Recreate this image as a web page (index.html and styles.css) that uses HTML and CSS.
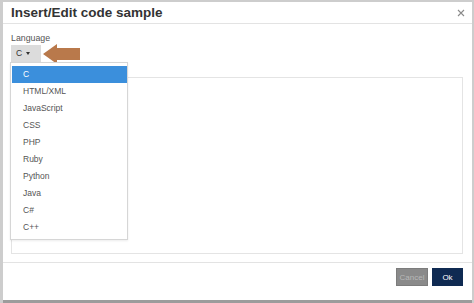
FILE: index.html
```html
<!DOCTYPE html>
<html>
<head>
<meta charset="utf-8">
<link rel="stylesheet" href="styles.css">
</head>
<body>
<div class="dialog">
  <div class="head">
    <div class="title">Insert/Edit code sample</div>
    <svg class="close" width="8" height="8" viewBox="0 0 8 8">
      <path d="M1 1 L7 7 M7 1 L1 7" stroke="#8a8a8a" stroke-width="1.1" fill="none"/>
    </svg>
  </div>
  <div class="body">
    <div class="label">Language</div>
    <div class="langwrap">
      <div class="langbtn">C <span class="caret"></span></div>
      <svg class="arrow" width="38" height="20" viewBox="0 0 38 20">
        <polygon points="0,10 14,0 14,4 37,4 37,16 14,16 14,20" fill="#b9794b"/>
      </svg>
      <ul class="menu">
        <li class="sel">C</li>
        <li>HTML/XML</li>
        <li>JavaScript</li>
        <li>CSS</li>
        <li>PHP</li>
        <li>Ruby</li>
        <li>Python</li>
        <li>Java</li>
        <li>C#</li>
        <li>C++</li>
      </ul>
    </div>
    <div class="code"></div>
  </div>
  <div class="foot">
    <button class="btn cancel">Cancel</button>
    <button class="btn ok">Ok</button>
  </div>
</div>
</body>
</html>
```
FILE: styles.css
```css
html, body {
  margin: 0;
  padding: 0;
}
body {
  width: 474px;
  height: 303px;
  background: #cdcdcd;
  padding: 2px 2px 3px 3px;
  box-sizing: border-box;
  font-family: "Liberation Sans", Arial, sans-serif;
  overflow: hidden;
}
.dialog {
  width: 469px;
  height: 298px;
  background: #fff;
  display: flex;
  flex-direction: column;
  box-shadow: 0 3px 0 #9c9c9c;
}
.head {
  height: 21px;
  border-bottom: 1px solid #e3e3e3;
  display: flex;
  align-items: center;
  justify-content: space-between;
  padding: 0 7px 0 8px;
}
.title {
  font-size: 13.5px;
  font-weight: bold;
  color: #333;
}
.close {
  display: block;
}
.body {
  padding: 9px 9px 0 8px;
  height: 238px;
  box-sizing: border-box;
}
.label {
  font-size: 8.8px;
  line-height: 11px;
  color: #555;
  margin-bottom: 1px;
}
.langwrap {
  position: relative;
  height: 17px;
}
.langbtn {
  width: 30px;
  height: 17px;
  box-sizing: border-box;
  background: #dcdcdc;
  font-size: 8.5px;
  line-height: 17px;
  color: #333;
  padding-left: 5px;
}
.caret {
  display: inline-block;
  width: 0;
  height: 0;
  border-left: 2.5px solid transparent;
  border-right: 2.5px solid transparent;
  border-top: 3px solid #333;
  vertical-align: middle;
  margin-left: 1px;
}
.arrow {
  position: absolute;
  left: 32px;
  top: -1px;
}
.menu {
  position: absolute;
  left: -1px;
  top: 17px;
  width: 118px;
  box-sizing: border-box;
  margin: 0;
  list-style: none;
  background: #fff;
  border: 1px solid #d6d6d6;
  box-shadow: 0 1px 2px rgba(0,0,0,0.08);
  padding: 3px 0 3px 1px;
  z-index: 2;
}
.menu li {
  height: 17px;
  line-height: 17px;
  font-size: 8.5px;
  color: #555;
  padding-left: 11px;
}
.menu li.sel {
  background: #3b8fdc;
  color: #fff;
}
.code {
  margin-top: 15px;
  height: 177px;
  border: 1px solid #e4e4e4;
  box-sizing: border-box;
}
.foot {
  border-top: 1px solid #e3e3e3;
  display: flex;
  justify-content: flex-end;
  gap: 4px;
  padding: 5px 9px 0 0;
  flex: 1;
}
.btn {
  height: 18px;
  border: none;
  font-family: "Liberation Sans", Arial, sans-serif;
  font-size: 8px;
  padding: 0;
  margin: 0;
}
.cancel {
  width: 32px;
  background: #8a8a8a;
  color: #b8b8b8;
  border: 1px solid #7c7c7c;
}
.ok {
  width: 31px;
  background: #0f2a52;
  color: #fff;
}
```
